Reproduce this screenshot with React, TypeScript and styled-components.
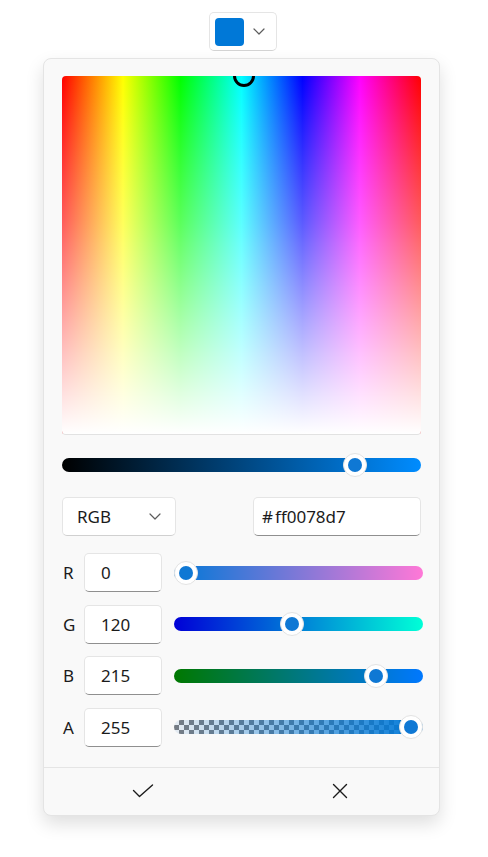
import styled, { createGlobalStyle } from "styled-components";

const GlobalStyle = createGlobalStyle`
  html, body {
    margin: 0;
    padding: 0;
    background: #ffffff;
    font-family: "Segoe UI", "Noto Sans", "Open Sans", sans-serif;
    color: #1b1b1b;
  }
  * {
    box-sizing: border-box;
  }
`;

const color = { r: 0, g: 120, b: 215, a: 255 };
const accent = "#0f78d4";

const Page = styled.div`
  display: flex;
  flex-direction: column;
  align-items: flex-start;
  padding: 12px 0 40px 43px;
`;

const SwatchButton = styled.div`
  display: flex;
  align-items: center;
  gap: 9px;
  margin-left: 166px;
  width: 68px;
  height: 39px;
  padding: 0 0 0 5px;
  background: #ffffff;
  border: 1px solid #e5e5e5;
  border-bottom-color: #d4d4d4;
  border-radius: 5px;
`;

const Swatch = styled.div<{ fill: string }>`
  width: 29px;
  height: 28px;
  border-radius: 4px;
  background: ${({ fill }) => fill};
`;

const Popup = styled.div`
  margin-top: 7px;
  width: 397px;
  background: #f9f9f9;
  border: 1px solid #e4e4e4;
  border-radius: 8px;
  box-shadow: 0 8px 18px rgba(0, 0, 0, 0.13);
  display: flex;
  flex-direction: column;
`;

const Body = styled.div`
  display: flex;
  flex-direction: column;
  padding: 17px 18px 20px 18px;
`;

const Spectrum = styled.div`
  position: relative;
  width: 359px;
  height: 359px;
  flex-shrink: 0;
  border-radius: 4px;
  overflow: hidden;
  border-bottom: 1px solid #e2e2e2;
  background: linear-gradient(
      to bottom,
      rgba(255, 255, 255, 0) 0%,
      rgba(255, 255, 255, 0.35) 40%,
      #ffffff 100%
    ),
    linear-gradient(
      to right,
      #ff0000 0%,
      #ffff00 17%,
      #00ff00 33%,
      #00ffff 50%,
      #0000ff 67%,
      #ff00ff 83%,
      #ff0000 100%
    );
`;

const SpectrumRing = styled.div`
  position: absolute;
  top: -11px;
  width: 22px;
  height: 22px;
  margin-left: -11px;
  border: 3px solid #000000;
  border-radius: 50%;
`;

const SliderBox = styled.div<{ mt?: number }>`
  position: relative;
  width: 100%;
  height: 24px;
  flex-shrink: 0;
  display: flex;
  align-items: center;
  margin-top: ${({ mt }) => mt ?? 0}px;
`;

const Track = styled.div<{ bg: string }>`
  width: 100%;
  height: 14px;
  border-radius: 7px;
  background: ${({ bg }) => bg};
`;

const Thumb = styled.div`
  position: absolute;
  top: 0;
  width: 24px;
  height: 24px;
  margin-left: -12px;
  border-radius: 50%;
  background: #ffffff;
  border: 1px solid #e3e3e3;
  display: flex;
  align-items: center;
  justify-content: center;

  &::after {
    content: "";
    width: 14px;
    height: 14px;
    border-radius: 50%;
    background: ${accent};
  }
`;

const ModeRow = styled.div`
  display: flex;
  justify-content: space-between;
  margin-top: 20px;
  margin-bottom: 17px;
`;

const Dropdown = styled.div`
  display: flex;
  align-items: center;
  justify-content: space-between;
  width: 114px;
  height: 39px;
  padding: 0 14px 0 14px;
  background: #ffffff;
  border: 1px solid #e5e5e5;
  border-bottom-color: #d0d0d0;
  border-radius: 5px;
  font-size: 17px;
`;

const Field = styled.div<{ w: number; pl: number }>`
  display: flex;
  align-items: center;
  width: ${({ w }) => w}px;
  height: 39px;
  flex-shrink: 0;
  padding-left: ${({ pl }) => pl}px;
  background: #ffffff;
  border: 1px solid #e5e5e5;
  border-bottom: 1px solid #8f8f8f;
  border-radius: 5px;
  font-size: 17px;
`;

const Hash = styled.span`
  margin-right: 2px;
`;

const Channels = styled.div`
  display: flex;
  flex-direction: column;
  gap: 12.5px;
`;

const ChannelRow = styled.div`
  display: flex;
  align-items: center;
`;

const ChannelLabel = styled.span`
  width: 22px;
  padding-left: 1px;
  font-size: 17px;
`;

const SliderWrap = styled.div`
  flex: 1;
  display: flex;
  margin-left: 12px;
  margin-right: -2px;
`;

const Footer = styled.div`
  display: grid;
  grid-template-columns: 1fr 1fr;
  height: 48px;
  border-top: 1px solid #e5e5e5;
`;

const FooterButton = styled.div`
  display: flex;
  align-items: center;
  justify-content: center;
  color: #1b1b1b;
`;

const Chevron = () => (
  <svg width="12" height="7" viewBox="0 0 12 7" fill="none">
    <path d="M1 1l5 5 5-5" stroke="#5c5c5c" strokeWidth="1.2" strokeLinecap="round" strokeLinejoin="round" />
  </svg>
);

const CheckIcon = () => (
  <svg width="22" height="14" viewBox="0 0 22 14" fill="none">
    <path d="M1.5 6.5l6 6 13-11.5" stroke="#1b1b1b" strokeWidth="1.4" strokeLinecap="round" strokeLinejoin="round" />
  </svg>
);

const CloseIcon = () => (
  <svg width="16" height="16" viewBox="0 0 16 16" fill="none">
    <path d="M1.5 1.5l13 13M14.5 1.5l-13 13" stroke="#1b1b1b" strokeWidth="1.4" strokeLinecap="round" />
  </svg>
);

const checker =
  "repeating-conic-gradient(#767c84 0% 25%, #e6ecf2 0% 50%) 0 0 / 10px 10px";

const thumbLeft = (frac: number) => ({ left: `calc(12px + (100% - 24px) * ${frac})` });

const channels = [
  {
    key: "R",
    value: color.r,
    bg: `linear-gradient(to right, rgb(0,${color.g},${color.b}), rgb(255,${color.g},${color.b}))`,
  },
  {
    key: "G",
    value: color.g,
    bg: `linear-gradient(to right, rgb(${color.r},0,${color.b}), rgb(${color.r},255,${color.b}))`,
  },
  {
    key: "B",
    value: color.b,
    bg: `linear-gradient(to right, rgb(${color.r},${color.g},0), rgb(${color.r},${color.g},255))`,
  },
  {
    key: "A",
    value: color.a,
    bg: `linear-gradient(to right, rgba(0,120,215,0), rgba(0,120,215,1)), ${checker}`,
  },
];

export default function App() {
  const fill = `rgb(${color.r},${color.g},${color.b})`;
  const v = Math.max(color.r, color.g, color.b) / 255;

  return (
    <>
      <GlobalStyle />
      <Page>
        <SwatchButton>
          <Swatch fill={fill} />
          <Chevron />
        </SwatchButton>
        <Popup>
          <Body>
            <Spectrum>
              <SpectrumRing style={{ left: "50.7%" }} />
            </Spectrum>
            <SliderBox mt={18}>
              <Track bg="linear-gradient(to right, #000000, #008cff)" />
              <Thumb style={thumbLeft(v * 0.995)} />
            </SliderBox>
            <ModeRow>
              <Dropdown>
                RGB
                <Chevron />
              </Dropdown>
              <Field w={168} pl={8}>
                <Hash>#</Hash>ff0078d7
              </Field>
            </ModeRow>
            <Channels>
              {channels.map((c) => (
                <ChannelRow key={c.key}>
                  <ChannelLabel>{c.key}</ChannelLabel>
                  <Field w={78} pl={16}>
                    {c.value}
                  </Field>
                  <SliderWrap>
                    <SliderBox>
                      <Track bg={c.bg} />
                      <Thumb style={thumbLeft(c.value / 255)} />
                    </SliderBox>
                  </SliderWrap>
                </ChannelRow>
              ))}
            </Channels>
          </Body>
          <Footer>
            <FooterButton>
              <CheckIcon />
            </FooterButton>
            <FooterButton>
              <CloseIcon />
            </FooterButton>
          </Footer>
        </Popup>
      </Page>
    </>
  );
}
